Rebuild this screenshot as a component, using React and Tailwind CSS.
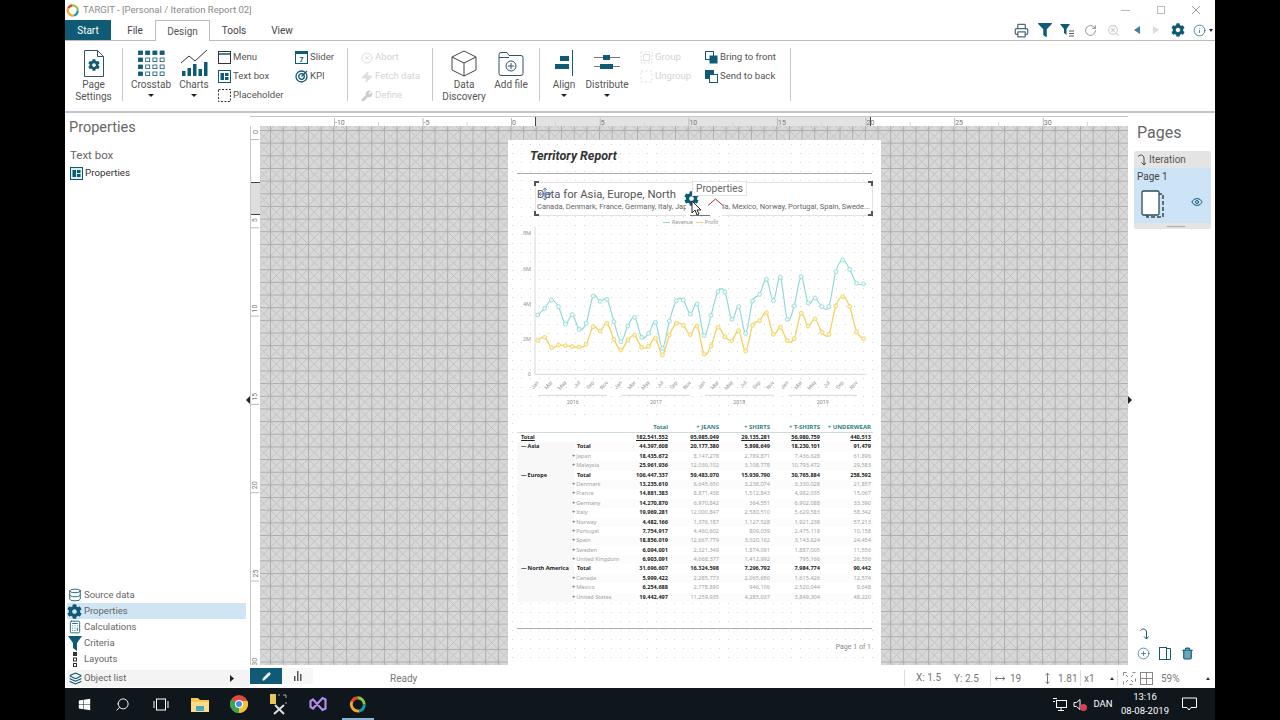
import { Printer, RotateCw, SearchX, Info, Move, Eye, Search, Pencil, Trash2, CirclePlus, Database, Calculator, Layers, Wrench, Zap, CircleX } from "lucide-react";
import { FaCog, FaFilter, FaWindows } from "react-icons/fa";

const teal = "#0f5b75";

const teals = [225,205,180,200,252,224,268,250,168,184,178,245,305,258,232,292,280,247,325,243,182,180,222,192,287,226,155,156,238,200,280,183,163,118,182,112,238,198,110,189,174,200,200,95,60,88,130,132];
const yellows = [301,292,323,315,317,320,321,313,260,273,250,298,330,300,286,322,319,295,345,285,250,256,284,258,342,318,262,290,302,272,333,256,242,218,283,262,302,296,220,258,237,277,283,198,170,200,275,296];
const months = ["Jan", "Mar", "May", "Jul", "Sep", "Nov"];

// smooth line through the points
function smooth(ys) {
  const pts = ys.map((y, i) => [83 + i * 20.8, y]);
  let d = `M${pts[0][0]} ${pts[0][1]}`;
  for (let i = 0; i < pts.length - 1; i++) {
    const p0 = pts[Math.max(i - 1, 0)];
    const p1 = pts[i];
    const p2 = pts[i + 1];
    const p3 = pts[Math.min(i + 2, pts.length - 1)];
    d += ` C${p1[0] + (p2[0] - p0[0]) / 6} ${p1[1] + (p2[1] - p0[1]) / 6} ${p2[0] - (p3[0] - p1[0]) / 6} ${p2[1] - (p3[1] - p1[1]) / 6} ${p2[0]} ${p2[1]}`;
  }
  return d;
}

const rows = [
  { a: "Total", c: "", v: ["182,541,552", "95,985,049", "29,135,281", "56,980,759", "440,513"], grand: true },
  { a: "Asia", c: "Total", v: ["44,397,608", "20,177,380", "5,898,649", "18,230,101", "91,479"], sub: true },
  { c: "Japan", v: ["18,435,672", "8,147,278", "2,789,871", "7,436,628", "61,896"] },
  { c: "Malaysia", v: ["25,961,936", "12,030,102", "3,108,778", "10,793,472", "29,583"] },
  { a: "Europe", c: "Total", v: ["106,447,337", "59,483,070", "15,939,790", "30,765,884", "258,592"], sub: true },
  { c: "Denmark", v: ["13,235,610", "6,645,650", "3,238,074", "3,330,028", "21,857"] },
  { c: "France", v: ["14,881,383", "8,871,438", "1,512,843", "4,982,035", "15,067"] },
  { c: "Germany", v: ["14,270,870", "6,970,842", "364,551", "6,902,088", "33,390"] },
  { c: "Italy", v: ["19,969,281", "12,000,847", "2,580,510", "5,629,583", "58,342"] },
  { c: "Norway", v: ["4,482,166", "1,376,187", "1,127,528", "1,921,238", "57,213"] },
  { c: "Portugal", v: ["7,754,917", "4,460,602", "809,039", "2,475,118", "10,158"] },
  { c: "Spain", v: ["18,856,019", "12,667,779", "3,020,162", "3,143,624", "24,454"] },
  { c: "Sweden", v: ["6,094,001", "2,321,349", "1,874,091", "1,887,005", "11,556"] },
  { c: "United Kingdom", v: ["6,903,091", "4,668,377", "1,412,992", "795,166", "26,556"] },
  { a: "North America", c: "Total", v: ["31,696,607", "16,324,598", "7,296,792", "7,984,774", "90,442"], sub: true },
  { c: "Canada", v: ["5,999,422", "2,285,773", "2,065,650", "1,615,426", "12,574"] },
  { c: "Mexico", v: ["6,254,688", "2,778,890", "946,106", "2,520,044", "9,648"] },
  { c: "United States", v: ["19,442,497", "11,259,935", "4,285,037", "3,849,304", "48,220"] },
];

function Logo({ size = 13 }) {
  return (
    <svg width={size} height={size} viewBox="0 0 20 20" fill="none" strokeWidth="3.4">
      <path d="M3.5 6.5A8 8 0 0 1 10 2" stroke="#e8452c" />
      <path d="M10 2a8 8 0 0 1 8 8" stroke="#8cc63f" />
      <path d="M18 10a8 8 0 0 1-6 7.7" stroke="#1a9ba8" />
      <path d="M12 17.7A8 8 0 0 1 3.5 6.5" stroke="#f0a92b" />
    </svg>
  );
}

function Sep() {
  return <div className="w-px h-[53px] mt-[7px] bg-[#c9c9c9] shrink-0" />;
}

function Arrow() {
  return <div className="w-0 h-0 border-x-[3px] border-x-transparent border-t-[3px] border-t-[#222] mt-[3px]" />;
}

function BigButton({ className, icon, label, label2, arrow }) {
  return (
    <div className={`flex flex-col items-center pt-[6px] text-[10px] leading-[12px] text-[#555] whitespace-nowrap shrink-0 ${className}`}>
      <div className="h-[32px] flex items-center justify-center">{icon}</div>
      <div className="h-[12px]">{label}</div>
      {label2 && <div className="h-[12px]">{label2}</div>}
      {arrow && <Arrow />}
    </div>
  );
}

function SmallButton({ icon, label, off }) {
  return (
    <div className={`h-[19px] flex items-center gap-[2px] text-[9.6px] whitespace-nowrap ${off ? "text-[#d4d4d4]" : "text-[#555]"}`}>
      <div className="w-[13px] h-[13px] flex items-center justify-center">{icon}</div>
      {label}
    </div>
  );
}

function CrosstabIcon() {
  const cells = [];
  for (let r = 0; r < 4; r++) {
    for (let c = 0; c < 4; c++) {
      const on = r === 0 || c === 0;
      cells.push(<rect key={`${r}${c}`} x={0.5 + c * 7.2} y={1 + r * 7} width="4" height="3.6" fill={on ? teal : "none"} stroke={teal} strokeWidth="0.8" />);
    }
  }
  return <svg width="27" height="27" viewBox="0 0 27 27">{cells}</svg>;
}

function ChartsIcon() {
  return (
    <svg width="27" height="27" viewBox="0 0 27 27" fill={teal}>
      <path d="M0 13l8-7 6 5L26 0" fill="none" stroke="#333" strokeWidth="1" />
      <rect x="1" y="21" width="3.5" height="5" />
      <rect x="6.5" y="18" width="3.5" height="8" />
      <rect x="12" y="14" width="3.5" height="12" />
      <rect x="17.5" y="19" width="3.5" height="7" />
      <rect x="23" y="12" width="3.5" height="14" />
    </svg>
  );
}

function Filter2() {
  return (
    <svg width="15" height="14" viewBox="0 0 15 14">
      <path d="M0 1h10L6.5 6v6L4 10V6z" fill={teal} />
      <path d="M9 8h5M9 10.500h5M9 13h5" stroke="#555" strokeWidth="1" />
    </svg>
  );
}

function TopRuler() {
  const labels = [["-10", 84], ["-5", 172.6], ["0", 261], ["5", 349.8], ["10", 438.4], ["15", 527], ["20", 615.6], ["25", 704.2], ["30", 792.8]];
  return (
    <svg width="878" height="10" className="block shrink-0 border-t border-[#c8c8c8]">
      <rect x="285" y="0" width="335" height="10" fill="#e3e3e3" />
      <rect x="285" y="0" width="1" height="10" fill="#444" />
      <rect x="620" y="0" width="1" height="10" fill="#444" />
      {labels.map(([t, x]) => (
        <g key={t}>
          <rect x={x} y="1" width="1" height="8" fill="#bbb" />
          <rect x={x + 44} y="5" width="1" height="4" fill="#d4d4d4" />
          <text x={x + 1} y="7.500" fontSize="7" fill="#777">{t}</text>
        </g>
      ))}
    </svg>
  );
}

function LeftRuler() {
  const labels = ["0", "5", "10", "15", "20", "25", "30"];
  return (
    <svg width="10" height="539" className="block shrink-0">
      <rect x="0" y="0" width="1" height="539" fill="#c8c8c8" />
      <rect x="1" y="56" width="9" height="33" fill="#dedede" />
      <rect x="1" y="56" width="9" height="1" fill="#444" />
      <rect x="1" y="88" width="9" height="1" fill="#444" />
      {labels.map((t, i) => {
        const y = 6 + i * 88.3;
        return (
          <g key={t}>
            <rect x="1" y={y + 7} width="8" height="1" fill="#bbb" />
            <text x="7.500" y={y} fontSize="7" fill="#777" textAnchor="middle" transform={`rotate(-90 7.500 ${y})`}>{t}</text>
          </g>
        );
      })}
    </svg>
  );
}

function Chart() {
  return (
    <svg width="370" height="194" viewBox="0 -42 1110 582" className="block ml-[2px]">
      <path d="M75 -40V403H1068" fill="none" stroke="#d8d8d8" strokeWidth="3" />
      {[["8M", -20], ["6M", 86], ["4M", 192], ["2M", 297], ["0", 403]].map(([t, y]) => (
        <text key={t} x="63" y={y + 6} fontSize="17" fill="#999" textAnchor="end">{t}</text>
      ))}
      <path d={smooth(teals)} fill="none" stroke="#8fd9d6" strokeWidth="3.500" />
      <path d={smooth(yellows)} fill="none" stroke="#f2d264" strokeWidth="4" />
      {teals.map((y, i) => <circle key={i} cx={83 + i * 20.8} cy={y} r="6" fill="#eafafa" stroke="#8fd9d6" strokeWidth="2.500" />)}
      {yellows.map((y, i) => <circle key={i} cx={83 + i * 20.8} cy={y} r="6" fill="#fbf1c4" stroke="#f2d264" strokeWidth="2.500" />)}
      {teals.filter((_, i) => i % 2 === 0).map((_, i) => {
        const x = 83 + i * 41.6;
        return <text key={i} x={x + 4} y="428" fontSize="16" fill="#999" textAnchor="end" transform={`rotate(-50 ${x + 4} 428)`}>{months[i % 6]}</text>;
      })}
      {[["2016", 85], ["2017", 335], ["2018", 585], ["2019", 835]].map(([t, x]) => (
        <g key={t}>
          <path d={`M${x} 466h205`} stroke="#c4c4c4" strokeWidth="2" />
          <text x={x + 103} y="492" fontSize="16" fill="#888" textAnchor="middle">{t}</text>
        </g>
      ))}
    </svg>
  );
}

function Report() {
  const header = ["Total", "+ JEANS", "+ SHIRTS", "+ T-SHIRTS", "+ UNDERWEAR"];
  return (
    <div className="relative w-[373px] h-[525px] bg-white bg-[radial-gradient(#d4d4d4_0.6px,transparent_0.8px)] bg-[size:9px_9px] flex flex-col shrink-0">
      <div className="h-[33px] pl-[22px] pt-[6px] text-[12.5px] leading-[20px] font-bold italic text-[#333]">Territory Report</div>
      <div className="h-px mx-[9px] bg-[#aaa]" />
      <div className="relative ml-[27px] mr-[8px] mt-[8px] h-[34px] bg-white border border-[#e2e2e2] pl-[1px]">
        <div className="text-[11.3px] leading-[15px] pt-[4px] text-[#555] whitespace-nowrap">Data for Asia, Europe, North</div>
        <div className="text-[7.5px] leading-[10px] text-[#666] whitespace-nowrap">Canada, Denmark, France, Germany, Italy, Japan, Malaysia, Mexico, Norway, Portugal, Spain, Swede...</div>
      </div>
      <div className="h-[10px] pt-[2px] flex items-center pl-[155px] text-[5.5px] text-[#999]">
        <span className="w-[7px] h-px bg-[#8fd9d6] mr-[2px]" />Revenue
        <span className="w-[7px] h-px bg-[#f2d264] ml-[3px] mr-[2px]" />Profit
      </div>
      <Chart />
      <div className="ml-[9px] mt-[3px] w-[356px] bg-white font-['Noto_Sans',sans-serif]">
        <div className="grid grid-cols-[57px_46px_48px_51px_51px_50px_51px] h-[10px] border-b border-[#cfdcdc] text-[6px] leading-[9px] font-bold text-[#2f7f84] text-right">
          <span />
          <span />
          {header.map((h) => <span key={h} className="whitespace-nowrap">{h}</span>)}
        </div>
        {rows.map((r, i) => (
          <div key={i} className={`grid grid-cols-[57px_46px_48px_51px_51px_50px_51px] h-[9.4px] text-[5.6px] leading-[9.4px] ${i % 2 ? "bg-[#fcfcfc]" : ""}`}>
            <span className={`pl-[4px] font-bold text-[#222] whitespace-nowrap ${r.grand ? "" : "bg-[#f8f8f8]"}`}>
              {r.sub && <span className="mr-[1px]">—</span>}
              <span className={r.grand ? "underline" : ""}>{r.a}</span>
            </span>
            <span className={`whitespace-nowrap ${r.sub ? "font-bold text-[#222] pl-[3px]" : "text-[#a2a2a2] -ml-[2px]"}`}>
              {!r.sub && r.c && <span className="font-bold text-[#666] mr-[1px]">+</span>}
              {r.c}
            </span>
            {r.v.map((n, j) => (
              <span key={j} className={`text-right ${r.grand ? "font-bold text-[#222] underline" : r.sub || j === 0 ? "font-bold text-[#222]" : "text-[#a2a2a2]"}`}>{n}</span>
            ))}
          </div>
        ))}
      </div>
      <div className="h-px mx-[9px] mt-[26px] bg-[#aaa]" />
      <div className="mt-[13px] pr-[10px] text-right text-[7px] leading-[10px] text-[#888]">Page 1 of 1</div>

      {/* stuff hovering over the text box */}
      <div className="absolute left-[26px] top-[41px] w-[5px] h-[5px] border-l-2 border-t-2 border-[#555]" />
      <div className="absolute left-[360px] top-[41px] w-[5px] h-[5px] border-r-2 border-t-2 border-[#555]" />
      <div className="absolute left-[26px] top-[71px] w-[5px] h-[5px] border-l-2 border-b-2 border-[#555]" />
      <div className="absolute left-[360px] top-[71px] w-[5px] h-[5px] border-r-2 border-b-2 border-[#555]" />
      <Move size={14} strokeWidth={1.500} className="absolute left-[30px] top-[47px] text-[#4a6fb5]" />
      <div className="absolute left-[178px] top-[60px] w-[36px] h-[16px] bg-white" />
      <div className="absolute left-[182px] top-[75px] w-[20px] h-px bg-[#777]" />
      <FaCog size={15} color={teal} className="absolute left-[176px] top-[51px]" />
      <svg width="18" height="8" viewBox="0 0 18 8" className="absolute left-[199px] top-[58px]">
        <path d="M1 7.500L8.500 1 16 7.500" fill="none" stroke="#a33" strokeWidth="1" />
      </svg>
      <svg width="11" height="16" viewBox="0 0 11 16" className="absolute left-[183px] top-[60px]">
        <path d="M1 1v12l3-3 2 5 2-1-2-4h4z" fill="#fff" stroke="#222" strokeWidth="1" />
      </svg>
      <div className="absolute left-[184px] top-[41px] h-[15px] px-[3px] bg-white border border-[#e4e4e4] text-[10.2px] leading-[13px] text-[#666] whitespace-nowrap">Properties</div>
    </div>
  );
}

function Canvas() {
  return (
    <div className="flex-1 h-[539px] pt-[14px] pl-[248px] overflow-hidden bg-[#d8d8d8] bg-[linear-gradient(#adadad_1px,transparent_1px),linear-gradient(90deg,#adadad_1px,transparent_1px),linear-gradient(45deg,transparent_49%,#c0c0c0_49%,#c0c0c0_51%,transparent_51%),linear-gradient(135deg,transparent_49%,#c0c0c0_49%,#c0c0c0_51%,transparent_51%)] bg-[size:12.67px_12.67px] bg-[position:10px_4px]">
      <Report />
    </div>
  );
}

function LeftPanel() {
  const items = [
    { t: "Source data", i: <Database size={14} color={teal} strokeWidth={1.500} /> },
    { t: "Properties", i: <FaCog size={15} color={teal} />, on: true },
    { t: "Calculations", i: <Calculator size={14} color={teal} strokeWidth={1.500} /> },
    { t: "Criteria", i: <svg width="14" height="15" viewBox="0 0 14 15"><path d="M0 0h14L9 7v8L5 12V7z" fill={teal} /></svg> },
    { t: "Layouts", i: <svg width="6" height="15" viewBox="0 0 6 15" fill="none" stroke="#333"><rect x="1.500" y="0.500" width="3" height="3" fill="#333" /><rect x="1.500" y="6" width="3" height="3" /><rect x="1.500" y="11.500" width="3" height="3" /></svg> },
  ];
  return (
    <div className="relative w-[185px] h-[552px] flex flex-col shrink-0">
      <div className="pl-[4px] pt-[2px] text-[14.5px] leading-[20px] text-[#666]">Properties</div>
      <div className="pl-[5px] mt-[9px] text-[11.5px] leading-[16px] text-[#666]">Text box</div>
      <div className="pl-[5px] mt-[1px] h-[18px] flex items-center gap-[2px] text-[9.8px] text-[#333]">
        <svg width="13" height="13" viewBox="0 0 13 13">
          <rect x="0.500" y="0.500" width="12" height="12" fill="#dfeef2" stroke={teal} />
          <rect x="2.500" y="3" width="3.500" height="7" fill={teal} />
          <rect x="7" y="3" width="3.500" height="3" fill={teal} />
          <rect x="7" y="7" width="3.500" height="3" fill={teal} />
        </svg>
        Properties
      </div>
      <div className="mt-auto pb-[1px] flex flex-col">
        {items.map((it) => (
          <div key={it.t} className={`h-[16px] ml-[2px] mr-[4px] flex items-center text-[9.5px] text-[#666] ${it.on ? "bg-[#cfe5f3]" : ""}`}>
            <div className="w-[15px] flex justify-center">{it.i}</div>
            <span className="pl-[2px]">{it.t}</span>
          </div>
        ))}
      </div>
      <svg width="4" height="8" viewBox="0 0 4 8" className="absolute left-[181px] top-[280px]"><path d="M4 0v8L0 4z" fill="#222" /></svg>
    </div>
  );
}

function RightPanel() {
  return (
    <div className="relative w-[87px] h-[552px] shrink-0 flex flex-col pl-[6px] pr-[4px]">
      <div className="pl-[3px] pt-[6px] text-[16px] leading-[22px] text-[#666]">Pages</div>
      <div className="mt-[7px] h-[78px] flex flex-col rounded-[2px] bg-[#e4e4e4]">
        <div className="h-[17px] flex items-center pl-[3px] gap-[3px] text-[10px] text-[#555] shrink-0">
          <svg width="9" height="12" viewBox="0 0 9 12" fill="none" stroke="#444"><path d="M1 2.500C3 0 7 1 7 4v7M4.500 8.500L7 11l2-2.500" /></svg>
          Iteration
        </div>
        <div className="h-[55px] bg-[#cde4f7] shrink-0">
          <div className="pl-[3px] pt-[2px] text-[10px] leading-[14px] text-[#444]">Page 1</div>
          <div className="flex items-start justify-between pl-[7px] pr-[8px] pt-[6px]">
            <svg width="23" height="28" viewBox="0 0 23 28" fill="none">
              <path d="M17 4h5v23H6v-3" stroke="#2e4b5a" strokeWidth="1.500" strokeDasharray="4 2" />
              <rect x="1" y="1" width="17" height="24" rx="1.500" fill="#fff" stroke="#2e4b5a" strokeWidth="1.300" />
            </svg>
            <Eye size={12} color={teal} className="mt-[6px]" />
          </div>
        </div>
        <div className="flex-1 flex justify-center items-center pl-[6px]"><span className="w-[18px] h-px bg-[#aaa]" /></div>
      </div>
      <div className="mt-auto pb-[8px]">
        <svg width="10" height="12" viewBox="0 0 9 12" fill="none" stroke={teal} className="ml-[5px] mb-[7px]"><path d="M1 2.500C3 0 7 1 7 4v7M4.500 8.500L7 11l2-2.500" /></svg>
        <div className="flex items-center gap-[9px] pl-[3px]">
          <CirclePlus size={13} color={teal} strokeWidth={1.200} />
          <svg width="12" height="13" viewBox="0 0 12 13" fill="none" stroke={teal}><rect x="0.500" y="0.500" width="7" height="12" /><path d="M7.500 1.500h4v11h-4" /></svg>
          <Trash2 size={13} color={teal} fill="#6aa5b8" className="ml-[1px]" />
        </div>
      </div>
      <svg width="4" height="8" viewBox="0 0 4 8" className="absolute left-[0px] top-[280px]"><path d="M0 0v8L4 4z" fill="#222" /></svg>
    </div>
  );
}

function StatusBar() {
  return (
    <div className="h-[20px] flex items-center text-[10px] text-[#777]">
      <div className="w-[182px] ml-[2px] mr-[1px] h-[17px] bg-[#f4f4f4] flex items-center text-[9.5px] text-[#666] shrink-0">
        <Layers size={13} color={teal} className="ml-[2px]" />
        <span className="pl-[2px]">Object list</span>
        <svg width="4" height="7" viewBox="0 0 4 7" className="ml-auto mr-[15px]"><path d="M0 0v7l4-3.500z" fill="#222" /></svg>
      </div>
      <div className="w-[32px] h-[16px] bg-[#0f5b75] flex items-center justify-center self-start shrink-0">
        <Pencil size={9} color="#fff" fill="#fff" />
      </div>
      <div className="w-[31px] h-[16px] flex items-center justify-center self-start bg-[#f7f7f7] rounded-br-[3px] shrink-0">
        <svg width="10" height="10" viewBox="0 0 10 10" fill="#555"><rect x="1" y="5" width="1.500" height="5" /><rect x="4" y="0" width="1.500" height="10" /><rect x="7" y="3" width="1.500" height="7" /></svg>
      </div>
      <div className="w-[591px] pl-[77px] shrink-0">Ready</div>
      <div className="h-[16px] border-l border-[#ddd] w-[50px] pl-[11px] leading-[16px] shrink-0">X: 1.5</div>
      <div className="w-[36px] shrink-0">Y: 2.5</div>
      <div className="h-[16px] border-l border-[#ddd] w-[51px] pl-[4px] flex items-center gap-[5px] shrink-0">
        <svg width="10" height="5" viewBox="0 0 10 5" fill="none" stroke="#777"><path d="M0 2.500h10M2 0.500L0.500 2.500 2 4.500M8 0.500l1.500 2-1.500 2" /></svg>
        19
      </div>
      <div className="w-[39px] pl-[4px] flex items-center gap-[8px] shrink-0">
        <svg width="5" height="11" viewBox="0 0 5 11" fill="none" stroke="#777"><path d="M2.500 0v11M0.500 2L2.500 0.500 4.500 2M0.500 9l2 1.500 2-1.500" /></svg>
        1.81
      </div>
      <div className="h-[16px] border-l border-[#ddd] w-[37px] pl-[3px] flex items-center shrink-0">x1<span className="ml-auto mr-[3px] w-0 h-0 border-x-[2.5px] border-x-transparent border-b-[3px] border-b-[#333]" /></div>
      <div className="h-[16px] border-l border-[#ddd] w-[98px] pl-[5px] flex items-center shrink-0">
        <svg width="13" height="13" viewBox="0 0 13 13" fill="none" stroke="#888"><rect x="0.500" y="0.500" width="12" height="12" strokeDasharray="3 6" /><path d="M3 3l2 2M10 3L8 5M3 10l2-2M10 10L8 8" /></svg>
        <svg width="13" height="13" viewBox="0 0 13 13" fill="none" stroke="#888" className="ml-[4px]"><rect x="0.500" y="0.500" width="12" height="12" /><path d="M6.500 1v11M1 6.500h11" /></svg>
        <span className="pl-[8px]">59%</span>
        <span className="ml-auto mr-[5px] w-0 h-0 border-x-[2.5px] border-x-transparent border-b-[3px] border-b-[#333]" />
      </div>
    </div>
  );
}

function Taskbar() {
  const cell = "w-[39.5px] h-[32px] flex items-center justify-center shrink-0";
  return (
    <div className="h-[32px] bg-[#0f171c] flex items-center text-white">
      <div className="w-[38px] flex justify-center shrink-0"><FaWindows size={13} /></div>
      <div className="w-[38px] flex justify-center shrink-0"><Search size={15} strokeWidth={1.500} className="-scale-x-100" /></div>
      <div className="w-[39px] flex justify-center shrink-0">
        <svg width="16" height="13" viewBox="0 0 16 13" fill="none" stroke="#fff"><rect x="3.500" y="1" width="9" height="11" /><path d="M1 3v7M15 3v7" /></svg>
      </div>
      <div className={cell}>
        <svg width="18" height="15" viewBox="0 0 18 15"><path d="M0 1h7l2 2h9v12H0z" fill="#f3c94f" /><rect x="0" y="5" width="18" height="10" fill="#f7dd8a" /><rect x="5" y="9" width="8" height="5" fill="#4aa8c4" /></svg>
      </div>
      <div className={cell}>
        <svg width="18" height="18" viewBox="0 0 18 18">
          <circle cx="9" cy="9" r="9" fill="#dd4b3e" />
          <path d="M9 9L1.200 4.500A9 9 0 0 0 9 18z" fill="#3da354" />
          <path d="M9 9v9A9 9 0 0 0 17.500 6H9z" fill="#f4c430" />
          <circle cx="9" cy="9" r="4" fill="#fff" />
          <circle cx="9" cy="9" r="3" fill="#4a8be8" />
        </svg>
      </div>
      <div className={cell}>
        <svg width="20" height="21" viewBox="0 0 20 21">
          <rect x="1" y="0" width="6" height="10" fill="#e6c65a" />
          <path d="M9 1h2M14 1h3v3M17 8v2" stroke="#aaa" fill="none" />
          <path d="M5 20l10-9M15 20L6 11" stroke="#ddd" strokeWidth="2" />
        </svg>
      </div>
      <div className={cell}>
        <svg width="18" height="18" viewBox="0 0 18 18" fill="none" stroke="#b48af0" strokeWidth="2.200"><path d="M1.500 6v6l2.500 1.500L13.500 3 16.500 4.500v9L13.500 15 4 4.500z" /></svg>
      </div>
      <div className={`${cell} relative`}>
        <Logo size={17} />
        <span className="absolute left-[4px] right-[4px] bottom-0 h-[2px] bg-[#8ab4d4]" />
      </div>
      <div className="ml-auto flex items-center">
        <div className="w-[20px] flex justify-center shrink-0">
          <svg width="14" height="13" viewBox="0 0 14 13" fill="none" stroke="#fff"><rect x="3.500" y="2.500" width="10" height="7" /><path d="M8 10v2M5 12.500h6M0 0.500h4M0 3.500h2" /></svg>
        </div>
        <div className="w-[20px] flex justify-center shrink-0 relative">
          <svg width="14" height="13" viewBox="0 0 14 13" fill="none" stroke="#fff"><path d="M1 4.500h2.500L7 1.500v10L3.500 8.500H1z" /></svg>
          <span className="absolute left-[10px] top-[6px] w-[7px] h-[7px] rounded-full bg-[#d9405a]" />
        </div>
        <div className="w-[26px] text-center text-[9.5px] shrink-0">DAN</div>
        <div className="w-[58px] text-center text-[9.5px] leading-[14px] shrink-0">
          <div>13:16</div>
          <div>08-08-2019</div>
        </div>
        <div className="w-[41px] pl-[8px] shrink-0">
          <svg width="15" height="14" viewBox="0 0 15 14" fill="none" stroke="#fff"><path d="M0.500 1h14v9.500H9L7 13l-2-2.500H0.500z" /></svg>
        </div>
      </div>
    </div>
  );
}

export default function App() {
  return (
    <div className="w-[1280px] h-[720px] bg-black px-[65px] overflow-hidden font-['Roboto',sans-serif]">
      <div className="h-[688px] bg-white flex flex-col">
        {/* title bar */}
        <div className="h-[20px] flex items-center pl-[1px] shrink-0">
          <Logo />
          <span className="pl-[4px] text-[9.5px] text-[#8a8a8a]">TARGIT - [Personal / Iteration Report 02]</span>
          <div className="ml-auto flex items-center text-[#999]">
            <span className="w-[9px] h-px bg-[#bbb] mr-[27px]" />
            <span className="w-[8px] h-[8px] border border-[#bbb] mr-[26px]" />
            <svg width="10" height="10" viewBox="0 0 10 10" stroke="#999" className="mr-[14px]"><path d="M1 1l8 8M9 1l-8 8" /></svg>
          </div>
        </div>

        {/* tabs */}
        <div className="h-[21px] flex border-b border-[#bbb] text-[10px] text-[#444] relative shrink-0">
          <div className="w-[46px] h-[20px] bg-[#0f5b75] text-white flex items-center justify-center">Start</div>
          <div className="w-[44px] pl-[4px] flex items-center justify-center">File</div>
          <div className="w-[55px] h-[21px] bg-white border border-b-0 border-[#bbb] flex items-center justify-center text-[#555]">Design</div>
          <div className="w-[48px] flex items-center justify-center">Tools</div>
          <div className="w-[48px] flex items-center justify-center">View</div>
          <div className="ml-auto flex items-center pr-[2px]">
            <div className="w-[23px] flex justify-center"><Printer size={15} color="#4b6b78" /></div>
            <div className="w-[23px] flex justify-center"><FaFilter size={14} color={teal} /></div>
            <div className="w-[23px] flex justify-center"><Filter2 /></div>
            <div className="w-[23px] flex justify-center"><RotateCw size={13} color="#666" strokeWidth={1.300} /></div>
            <div className="w-[23px] flex justify-center"><SearchX size={13} color="#ccc" /></div>
            <div className="w-[24px] flex justify-center"><span className="w-0 h-0 border-y-[4px] border-y-transparent border-r-[6px] border-r-[#3f7fa0]" /></div>
            <div className="w-[14px] flex justify-center"><span className="w-0 h-0 border-y-[4px] border-y-transparent border-l-[6px] border-l-[#dcdcdc]" /></div>
            <div className="w-[30px] flex justify-center"><FaCog size={14} color={teal} /></div>
            <Info size={13} color={teal} strokeWidth={1.300} />
            <span className="w-0 h-0 ml-[3px] border-x-[2.5px] border-x-transparent border-t-[3px] border-t-[#222]" />
          </div>
        </div>

        {/* ribbon */}
        <div className="h-[72px] flex border-b-2 border-[#c4c4c4] shrink-0">
          <BigButton
            className="w-[57px]"
            label="Page"
            label2="Settings"
            icon={
              <svg width="20" height="27" viewBox="0 0 20 27" fill="none" stroke="#2e5566">
                <path d="M0.500 0.500h13l6 6v20h-19zM13.500 0.500v6h6" />
                <foreignObject x="4" y="9" width="12" height="12"><FaCog size={12} color={teal} /></foreignObject>
              </svg>
            }
          />
          <Sep />
          <BigButton className="w-[56px]" label="Crosstab" arrow icon={<CrosstabIcon />} />
          <BigButton className="w-[30px]" label="Charts" arrow icon={<ChartsIcon />} />
          <div className="w-[86px] pl-[9px] pt-[7px] shrink-0">
            <SmallButton label="Menu" icon={<svg width="13" height="13" viewBox="0 0 13 13" fill="none" stroke="#333"><rect x="0.500" y="0.500" width="12" height="12" /><path d="M1 3h11" strokeWidth="1.500" stroke={teal} /></svg>} />
            <SmallButton label="Text box" icon={<svg width="13" height="13" viewBox="0 0 13 13"><rect x="0.500" y="0.500" width="12" height="12" fill="#fff" stroke={teal} /><rect x="2.500" y="3" width="3.500" height="7" fill={teal} /><rect x="7" y="3" width="3.500" height="3" fill={teal} /><rect x="7" y="7" width="3.500" height="3" fill={teal} /></svg>} />
            <SmallButton label="Placeholder" icon={<svg width="13" height="13" viewBox="0 0 13 13" fill="none" stroke="#333" strokeDasharray="2 1.500"><rect x="0.500" y="0.500" width="12" height="12" /></svg>} />
          </div>
          <div className="w-[52px] pt-[7px] shrink-0">
            <SmallButton label="Slider" icon={<svg width="13" height="13" viewBox="0 0 13 13"><rect x="0.500" y="0.500" width="12" height="12" fill="#fff" stroke={teal} /><rect x="0" y="0" width="13" height="3" fill={teal} /><text x="6.500" y="11" fontSize="7.500" fontWeight="700" fill={teal} textAnchor="middle">7</text></svg>} />
            <SmallButton label="KPI" icon={<svg width="13" height="13" viewBox="0 0 13 13" fill="none" stroke={teal} strokeWidth="1.300"><circle cx="6.500" cy="6.500" r="5.500" /><circle cx="6.500" cy="6.500" r="2.800" /><path d="M6.500 6.500L12 1" /></svg>} />
          </div>
          <Sep />
          <div className="w-[84px] pl-[12px] pt-[7px] shrink-0">
            <SmallButton off label="Abort" icon={<CircleX size={12} color="#ddd" />} />
            <SmallButton off label="Fetch data" icon={<Zap size={12} color="#ddd" fill="#ddd" />} />
            <SmallButton off label="Define" icon={<Wrench size={12} color="#ccc" fill="#ccc" />} />
          </div>
          <Sep />
          <BigButton
            className="w-[62px]"
            label="Data"
            label2="Discovery"
            icon={<svg width="26" height="27" viewBox="0 0 26 27" fill="none" stroke="#444"><path d="M13 1l12 6v13l-12 6-12-6V7zM1 7l12 6 12-6M13 13v13" /></svg>}
          />
          <BigButton
            className="w-[32px]"
            label="Add file"
            icon={<svg width="26" height="25" viewBox="0 0 26 25" fill="none" stroke="#2e5566"><path d="M1 3.500q0-2 2-2h6l2 3h12q2 0 2 2v16q0 2-2 2H3q-2 0-2-2zM1 6.500h10" /><circle cx="13" cy="15" r="5" /><path d="M13 12v6M10 15h6" /></svg>}
          />
          <div className="w-[12px] shrink-0" />
          <Sep />
          <BigButton
            className="w-[48px]"
            label="Align"
            arrow
            icon={<svg width="20" height="26" viewBox="0 0 20 26" fill={teal}><rect x="6" y="6" width="9" height="5" /><rect x="1" y="14" width="14" height="5" /><rect x="18" y="0" width="1" height="26" /></svg>}
          />
          <BigButton
            className="w-[38px]"
            label="Distribute"
            arrow
            icon={<svg width="26" height="20" viewBox="0 0 26 20" fill={teal}><rect x="0" y="4" width="26" height="1" fill="#777" /><rect x="0" y="13" width="26" height="1" fill="#777" /><rect x="9" y="2" width="7" height="5" /><rect x="6" y="11" width="13" height="5" /></svg>}
          />
          <div className="w-[79px] pl-[14px] pt-[7px] shrink-0">
            <SmallButton off label="Group" icon={<svg width="13" height="13" viewBox="0 0 13 13" fill="none" stroke="#ddd"><rect x="1" y="1" width="11" height="11" strokeDasharray="2 1.500" /><rect x="3.500" y="3.500" width="6" height="6" /></svg>} />
            <SmallButton off label="Ungroup" icon={<svg width="13" height="13" viewBox="0 0 13 13" fill="none" stroke="#ddd"><rect x="1" y="1" width="11" height="11" strokeDasharray="2 2.500" /></svg>} />
          </div>
          <div className="w-[85px] pt-[7px] shrink-0">
            <SmallButton label="Bring to front" icon={<svg width="13" height="13" viewBox="0 0 13 13"><rect x="0.500" y="0.500" width="8" height="8" fill="#fff" stroke={teal} /><rect x="4.500" y="4.500" width="8" height="8" fill={teal} /></svg>} />
            <SmallButton label="Send to back" icon={<svg width="13" height="13" viewBox="0 0 13 13"><rect x="0" y="0" width="9" height="9" fill={teal} /><rect x="4.500" y="4.500" width="8" height="8" fill="#fff" stroke={teal} /></svg>} />
          </div>
          <Sep />
        </div>

        {/* main area */}
        <div className="h-[555px] pt-[3px] flex shrink-0">
          <LeftPanel />
          <div className="w-[878px] flex flex-col shrink-0">
            <TopRuler />
            <div className="flex">
              <LeftRuler />
              <Canvas />
            </div>
          </div>
          <RightPanel />
        </div>

        <StatusBar />
      </div>
      <Taskbar />
    </div>
  );
}
